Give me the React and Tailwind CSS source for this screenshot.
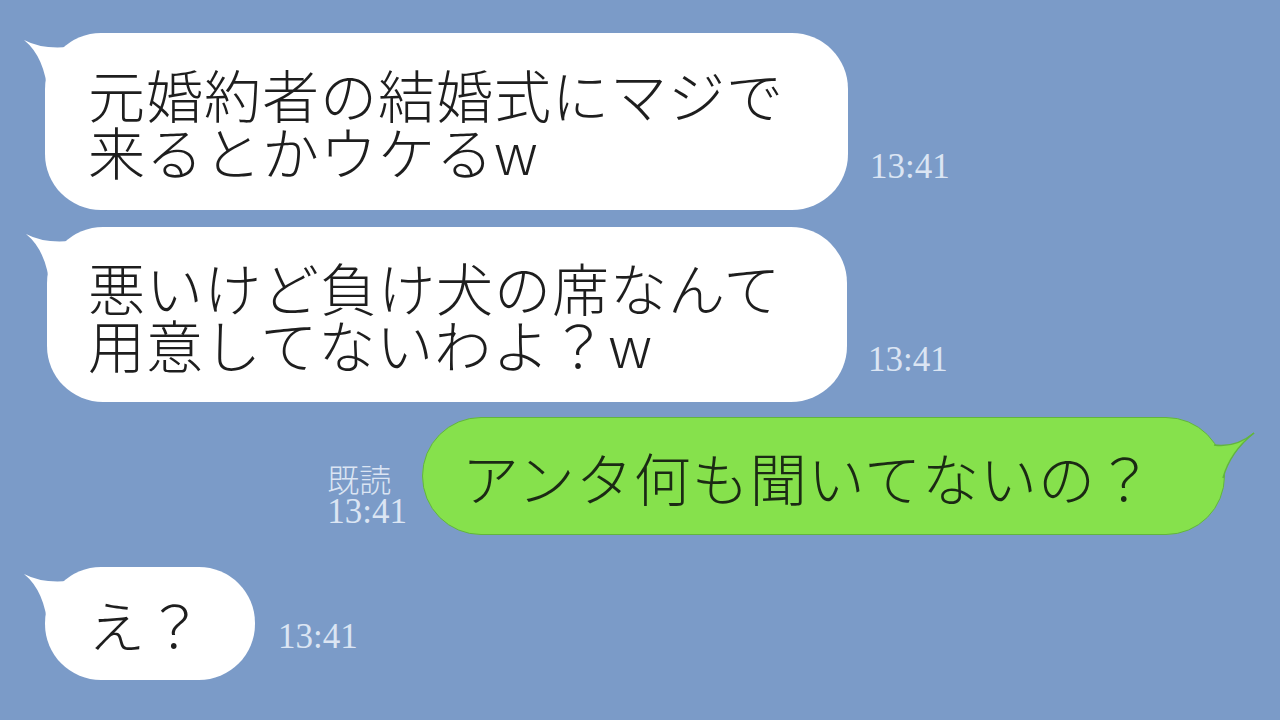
import React from "react";

const jp = { fontFamily: '"Noto Sans CJK JP", "Noto Sans", sans-serif' };
const ts = { fontFamily: '"Liberation Serif", serif' };

function WhiteTail() {
  return (
    <svg
      className="absolute left-[-24px] top-0"
      width="70"
      height="70"
      viewBox="0 0 70 70"
      aria-hidden="true"
    >
      <path d="M3 7 Q 26 19 60 12 L 60 62 L 27 62 Q 24 24 3 7 Z" fill="#ffffff" />
    </svg>
  );
}

function GreenTail() {
  return (
    <svg
      className="absolute right-[-34px] top-0"
      width="70"
      height="70"
      viewBox="0 0 70 70"
      aria-hidden="true"
    >
      <path
        d="M66 15 Q 48 30 26 27 L 18 27 L 18 64 L 34 64 L 35 60 Q 42 34 66 15 Z"
        fill="#86e14c"
      />
      <path d="M66 15 Q 48 30 26 27" fill="none" stroke="#62b53e" strokeWidth="1.5" />
      <path d="M35 60 Q 42 34 66 15" fill="none" stroke="#62b53e" strokeWidth="1.5" />
    </svg>
  );
}

function Stamp({ className }) {
  return (
    <div
      className={"text-[35px] leading-none text-[#dbe5f3] " + className}
      style={ts}
    >
      13:41
    </div>
  );
}

const msg = "relative text-[57px] leading-[57px] tracking-[1px] text-[#1e1e1e] font-light";

export default function App() {
  return (
    <div className="w-[1280px] h-[720px] bg-[#7b9bc8] overflow-hidden flex flex-col pt-[33px]">
      {/* Row 1 */}
      <div className="flex items-end pl-[45px]">
        <div className="relative w-[803px] h-[177px] bg-white rounded-[56px] flex flex-col justify-center pl-[43px]">
          <WhiteTail />
          <div className={msg} style={jp}>
            <div>元婚約者の結婚式にマジで</div>
            <div>来るとかウケるw</div>
          </div>
        </div>
        <Stamp className="ml-[22px] mb-[26px]" />
      </div>

      {/* Row 2 */}
      <div className="flex items-end pl-[47px] mt-[17px]">
        <div className="relative w-[800px] h-[175px] bg-white rounded-[56px] flex flex-col justify-center pl-[41px]">
          <WhiteTail />
          <div className={msg} style={jp}>
            <div>悪いけど負け犬の席なんて</div>
            <div>用意してないわよ？w</div>
          </div>
        </div>
        <Stamp className="ml-[21px] mb-[25px]" />
      </div>

      {/* Row 3 */}
      <div className="flex items-end justify-end pr-[55px] mt-[15px]">
        <div className="flex flex-col items-start mr-[15px] mb-[6px] text-[#dbe5f3]">
          <div className="text-[32px] leading-[34px] font-light" style={jp}>
            既読
          </div>
          <div className="text-[35px] leading-[34px]" style={ts}>
            13:41
          </div>
        </div>
        <div className="relative w-[803px] h-[118px] bg-[#86e14c] border-[1.5px] border-[#62b53e] rounded-[59px] flex items-center pl-[39px]">
          <GreenTail />
          <div
            className="relative text-[57px] leading-[57px] tracking-[1px] text-[#1b2a14] font-light"
            style={jp}
          >
            アンタ何も聞いてないの？
          </div>
        </div>
      </div>

      {/* Row 4 */}
      <div className="flex items-end pl-[45px] mt-[32px]">
        <div className="relative w-[210px] h-[113px] bg-white rounded-[56px] flex items-center pl-[43px]">
          <WhiteTail />
          <div className={msg} style={jp}>
            え？
          </div>
        </div>
        <Stamp className="ml-[23px] mb-[26px]" />
      </div>
    </div>
  );
}
